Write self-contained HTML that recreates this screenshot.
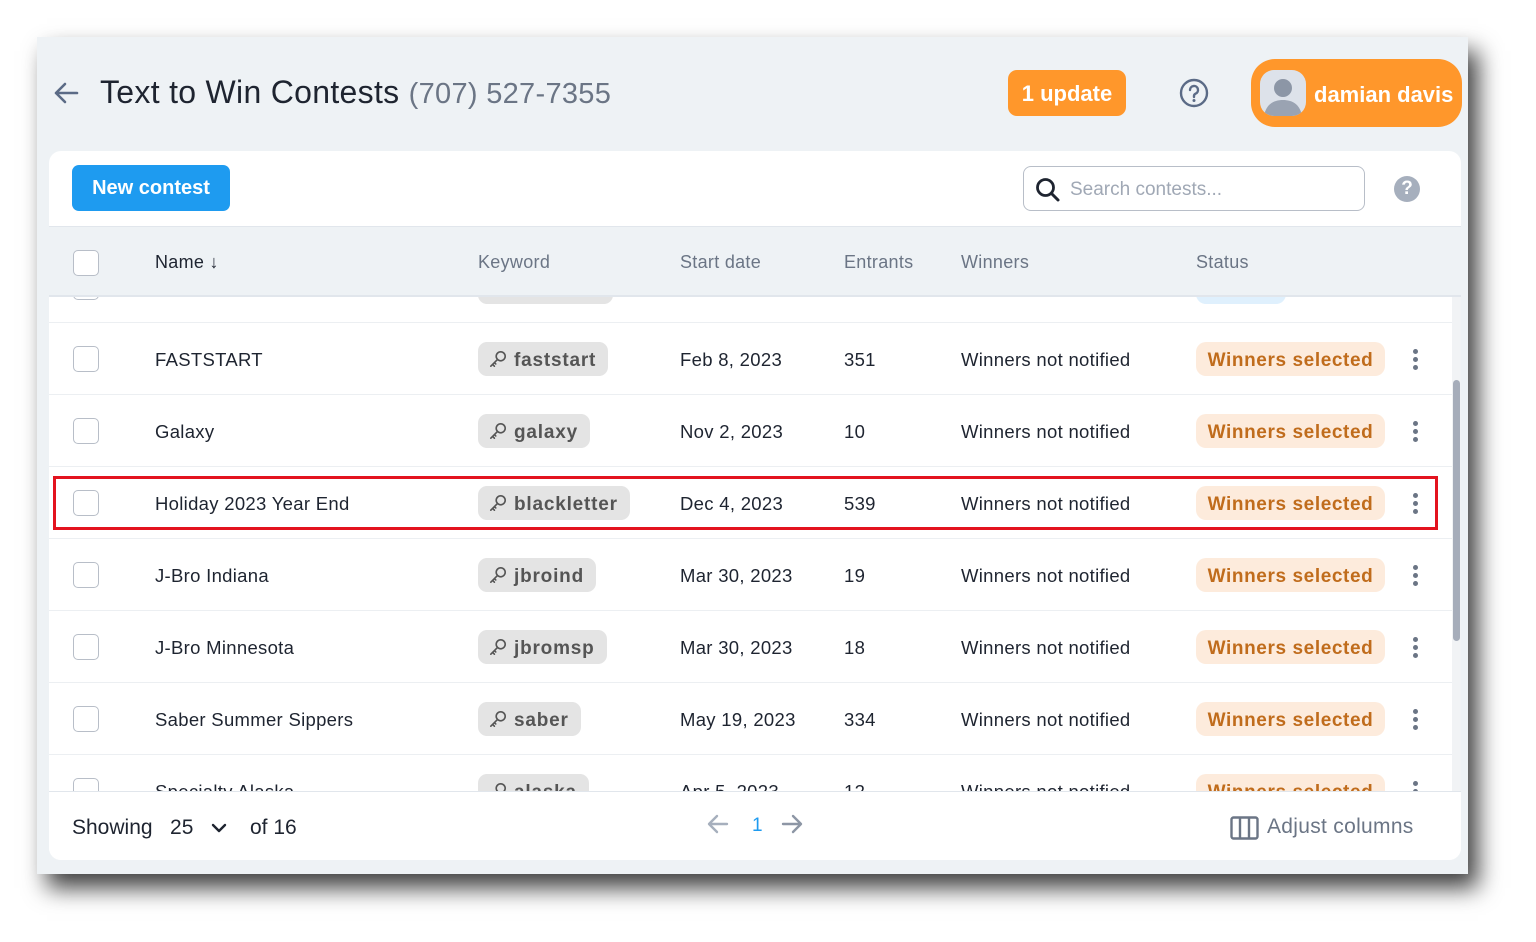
<!DOCTYPE html>
<html><head><meta charset="utf-8"><style>
*{box-sizing:border-box;margin:0;padding:0}
body{width:1536px;height:942px;background:#fff;font-family:"Liberation Sans",sans-serif;position:relative;overflow:hidden;color:#1e2430}
.win{position:absolute;left:37px;top:37px;width:1431px;height:837px;background:#eef2f5;box-shadow:10px 14px 22px rgba(0,0,0,.75)}
.abs{position:absolute}
.card{position:absolute;left:12px;top:114px;width:1412px;height:709px;background:#fff;border-radius:12px;overflow:hidden}
.th{position:absolute;top:75px;left:0;width:1412px;height:71px;background:#eef2f5;border-top:1px solid #e1e6ec;border-bottom:2px solid #e1e6ec;z-index:2}
.th span{position:absolute;top:25px;font-size:18px;color:#6b7585;letter-spacing:.3px}
.cb{position:absolute;width:26px;height:26px;border:1.5px solid #b8bec8;border-radius:5px;background:#fff}
.rows{position:absolute;top:146px;left:0;width:1403px;height:494px;overflow:hidden}
.row{position:absolute;left:0;width:1403px;height:72px;border-bottom:1px solid #eceff2}
.row .t{position:absolute;top:26px;font-size:18.5px;color:#1e2430;letter-spacing:.3px}
.kw{position:absolute;left:429px;top:19px;height:34px;border-radius:9px;background:#e4e4e4;font-size:19px;letter-spacing:.8px;padding:8px 12px 0 36px;font-weight:bold;color:#555}
.kw svg{position:absolute;left:11px;top:8px}
.st{position:absolute;left:1147px;top:19px;width:189px;height:34px;border-radius:10px;background:#fdebdc;color:#c06c1c;font-size:19px;font-weight:bold;letter-spacing:.6px;padding-top:8px;text-align:center}
.dots{position:absolute;left:1364px;top:26px;width:5px}
.dots i{display:block;width:5px;height:5px;border-radius:50%;background:#6b7585;margin-bottom:3px}
.foot{position:absolute;left:0;top:640px;width:1412px;height:69px;border-top:1px solid #e1e6ec;background:#fff}
</style></head><body>
<svg width="0" height="0" style="position:absolute"><defs><symbol id="k" viewBox="0 0 20 20"><circle cx="13" cy="7" r="5" stroke="#555" stroke-width="1.8" fill="none"/><path d="M9.5 10.5L2 18M4 16l2 2M6 14l1.5 1.5" stroke="#555" stroke-width="1.8" fill="none" stroke-linecap="round"/></symbol></defs></svg>
<div class="win">
  <svg class="abs" style="left:16px;top:44px" width="26" height="24" viewBox="0 0 26 24"><path d="M24 12H3M12 3L3 12l9 9" stroke="#5b6b86" stroke-width="2.6" fill="none" stroke-linecap="round" stroke-linejoin="round"/></svg>
  <div class="abs" style="left:63px;top:37px;font-size:32px;color:#1e2430;letter-spacing:.3px">Text to Win Contests <span style="color:#6b7585;font-size:29px">(707) 527-7355</span></div>
  <div class="abs" style="left:971px;top:33px;width:118px;height:46px;background:#ff972b;border-radius:9px;color:#fff;font-size:22px;font-weight:bold;text-align:center;padding-top:11px">1 update</div>
  <svg class="abs" style="left:1142px;top:41px" width="30" height="30" viewBox="0 0 30 30"><circle cx="15" cy="15" r="13" stroke="#5b6b86" stroke-width="2.4" fill="none"/><path d="M11 12a4 4 0 1 1 5.5 3.7c-1 .5-1.5 1.2-1.5 2.3v1" stroke="#5b6b86" stroke-width="2.4" fill="none" stroke-linecap="round"/><circle cx="15" cy="22.5" r="1.5" fill="#5b6b86"/></svg>
  <div class="abs" style="left:1214px;top:22px;width:211px;height:68px;background:#ff972b;border-radius:24px"></div>
  <div class="abs" style="left:1223px;top:33px;width:46px;height:46px;background:#dde2ea;border-radius:14px;overflow:hidden"><svg width="46" height="46"><circle cx="23" cy="18" r="9" fill="#8c96a6"/><path d="M4 46c2-12 10-16 19-16s17 4 19 16z" fill="#9aa3b2"/></svg></div>
  <div class="abs" style="left:1277px;top:45px;font-size:22px;font-weight:bold;color:#fff">damian davis</div>

  <div class="card">
    <div class="abs" style="left:23px;top:14px;width:158px;height:46px;background:#1e9bf0;border-radius:7px;color:#fff;font-size:20px;font-weight:bold;text-align:center;padding-top:12px">New contest</div>
    <div class="abs" style="left:974px;top:15px;width:342px;height:45px;border:1.5px solid #b8bec8;border-radius:8px"></div>
    <svg class="abs" style="left:986px;top:26px" width="26" height="26" viewBox="0 0 26 26"><circle cx="10.5" cy="10.5" r="8" stroke="#1e2430" stroke-width="2.8" fill="none"/><path d="M16.5 16.5L23 23" stroke="#1e2430" stroke-width="3" stroke-linecap="round"/></svg>
    <div class="abs" style="left:1021px;top:28px;font-size:19px;color:#a0a8b5">Search contests...</div>
    <div class="abs" style="left:1345px;top:25px;width:26px;height:26px;border-radius:50%;background:#a6afbd;color:#fff;font-weight:bold;font-size:19px;text-align:center;line-height:26px">?</div>

    <div class="th">
      <div class="cb" style="left:24px;top:23px"></div>
      <span style="left:106px;color:#1e2430">Name &#8595;</span>
      <span style="left:429px">Keyword</span>
      <span style="left:631px">Start date</span>
      <span style="left:795px">Entrants</span>
      <span style="left:912px">Winners</span>
      <span style="left:1147px">Status</span>
    </div>
    <div class="rows">
      <div class="row" style="top:-46px"><div class="kw" style="width:135px"></div><div class="st" style="width:90px;background:#dff0fd"></div><div class="cb" style="left:24px;top:23px"></div></div>
      <div class="row" style="top:26px"><div class="cb" style="left:24px;top:23px"></div><div class="t" style="left:106px">FASTSTART</div><div class="kw"><svg width="18" height="18"><use href="#k"/></svg>faststart</div><div class="t" style="left:631px">Feb 8, 2023</div><div class="t" style="left:795px">351</div><div class="t" style="left:912px">Winners not notified</div><div class="st">Winners selected</div><div class="dots"><i></i><i></i><i></i></div></div>
      <div class="row" style="top:98px"><div class="cb" style="left:24px;top:23px"></div><div class="t" style="left:106px">Galaxy</div><div class="kw"><svg width="18" height="18"><use href="#k"/></svg>galaxy</div><div class="t" style="left:631px">Nov 2, 2023</div><div class="t" style="left:795px">10</div><div class="t" style="left:912px">Winners not notified</div><div class="st">Winners selected</div><div class="dots"><i></i><i></i><i></i></div></div>
      <div class="row" style="top:170px"><div class="cb" style="left:24px;top:23px"></div><div class="t" style="left:106px">Holiday 2023 Year End</div><div class="kw"><svg width="18" height="18"><use href="#k"/></svg>blackletter</div><div class="t" style="left:631px">Dec 4, 2023</div><div class="t" style="left:795px">539</div><div class="t" style="left:912px">Winners not notified</div><div class="st">Winners selected</div><div class="dots"><i></i><i></i><i></i></div></div>
      <div class="row" style="top:242px"><div class="cb" style="left:24px;top:23px"></div><div class="t" style="left:106px">J-Bro Indiana</div><div class="kw"><svg width="18" height="18"><use href="#k"/></svg>jbroind</div><div class="t" style="left:631px">Mar 30, 2023</div><div class="t" style="left:795px">19</div><div class="t" style="left:912px">Winners not notified</div><div class="st">Winners selected</div><div class="dots"><i></i><i></i><i></i></div></div>
      <div class="row" style="top:314px"><div class="cb" style="left:24px;top:23px"></div><div class="t" style="left:106px">J-Bro Minnesota</div><div class="kw"><svg width="18" height="18"><use href="#k"/></svg>jbromsp</div><div class="t" style="left:631px">Mar 30, 2023</div><div class="t" style="left:795px">18</div><div class="t" style="left:912px">Winners not notified</div><div class="st">Winners selected</div><div class="dots"><i></i><i></i><i></i></div></div>
      <div class="row" style="top:386px"><div class="cb" style="left:24px;top:23px"></div><div class="t" style="left:106px">Saber Summer Sippers</div><div class="kw"><svg width="18" height="18"><use href="#k"/></svg>saber</div><div class="t" style="left:631px">May 19, 2023</div><div class="t" style="left:795px">334</div><div class="t" style="left:912px">Winners not notified</div><div class="st">Winners selected</div><div class="dots"><i></i><i></i><i></i></div></div>
      <div class="row" style="top:458px"><div class="cb" style="left:24px;top:23px"></div><div class="t" style="left:106px">Specialty Alaska</div><div class="kw"><svg width="18" height="18"><use href="#k"/></svg>alaska</div><div class="t" style="left:631px">Apr 5, 2023</div><div class="t" style="left:795px">12</div><div class="t" style="left:912px">Winners not notified</div><div class="st">Winners selected</div><div class="dots"><i></i><i></i><i></i></div></div>
    </div>
    <div class="abs" style="left:1403px;top:146px;width:9px;height:494px;background:#f1f3f5"></div>
    <div class="abs" style="left:1404px;top:229px;width:7px;height:261px;background:#a6adba;border-radius:4px"></div>
    <div class="abs" style="left:4px;top:325px;width:1385px;height:54px;border:3px solid #e3131f;z-index:3"></div>
    <div class="foot">
      <div class="abs" style="left:23px;top:24px;font-size:21px;color:#1e2430">Showing&nbsp;&nbsp; 25</div>
      <svg class="abs" style="left:162px;top:30px" width="16" height="12" viewBox="0 0 16 12"><path d="M2 3l6 6 6-6" stroke="#1e2430" stroke-width="2.4" fill="none" stroke-linecap="round" stroke-linejoin="round"/></svg>
      <div class="abs" style="left:201px;top:24px;font-size:21px;color:#1e2430">of 16</div>
      <svg class="abs" style="left:658px;top:22px" width="22" height="20" viewBox="0 0 22 20"><path d="M20 10H3M10 2L2 10l8 8" stroke="#a6afbd" stroke-width="2.4" fill="none" stroke-linecap="round" stroke-linejoin="round"/></svg>
      <div class="abs" style="left:703px;top:23px;font-size:19px;color:#1e9bf0">1</div>
      <svg class="abs" style="left:732px;top:22px" width="22" height="20" viewBox="0 0 22 20"><path d="M2 10h17M12 2l8 8-8 8" stroke="#8d96a5" stroke-width="2.4" fill="none" stroke-linecap="round" stroke-linejoin="round"/></svg>
      <svg class="abs" style="left:1181px;top:24px" width="29" height="24" viewBox="0 0 29 24"><rect x="1.5" y="1.5" width="26" height="21" rx="2" stroke="#6b7585" stroke-width="2.4" fill="none"/><path d="M10 2v20M19 2v20" stroke="#6b7585" stroke-width="2.4"/></svg>
      <div class="abs" style="left:1218px;top:23px;font-size:21px;color:#6b7585;letter-spacing:.3px">Adjust columns</div>
    </div>
  </div>
</div>
</body></html>
